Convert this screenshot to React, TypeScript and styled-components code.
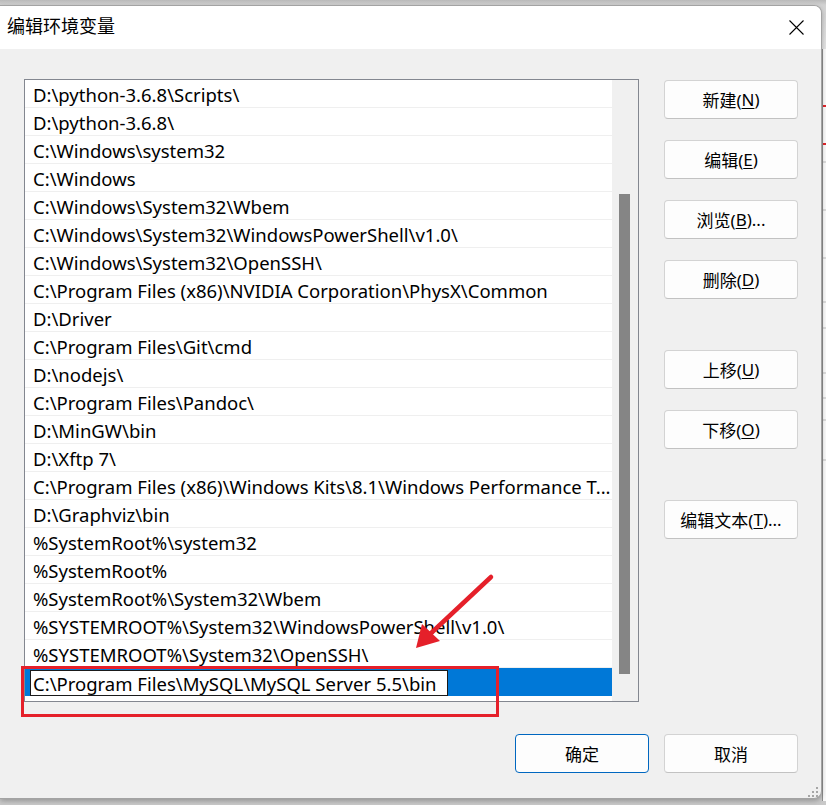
import React from 'react';
import styled, { createGlobalStyle } from 'styled-components';

const GlobalStyle = createGlobalStyle`
  html, body {
    margin: 0;
    padding: 0;
  }
  body {
    width: 826px;
    height: 805px;
    overflow: hidden;
    font-family: "Noto Sans", "Noto Sans CJK SC", sans-serif;
  }
`;

const paths = [
  'D:\\python-3.6.8\\Scripts\\',
  'D:\\python-3.6.8\\',
  'C:\\Windows\\system32',
  'C:\\Windows',
  'C:\\Windows\\System32\\Wbem',
  'C:\\Windows\\System32\\WindowsPowerShell\\v1.0\\',
  'C:\\Windows\\System32\\OpenSSH\\',
  'C:\\Program Files (x86)\\NVIDIA Corporation\\PhysX\\Common',
  'D:\\Driver',
  'C:\\Program Files\\Git\\cmd',
  'D:\\nodejs\\',
  'C:\\Program Files\\Pandoc\\',
  'D:\\MinGW\\bin',
  'D:\\Xftp 7\\',
  'C:\\Program Files (x86)\\Windows Kits\\8.1\\Windows Performance T...',
  'D:\\Graphviz\\bin',
  '%SystemRoot%\\system32',
  '%SystemRoot%',
  '%SystemRoot%\\System32\\Wbem',
  '%SYSTEMROOT%\\System32\\WindowsPowerShell\\v1.0\\',
  '%SYSTEMROOT%\\System32\\OpenSSH\\',
];

const editing = 'C:\\Program Files\\MySQL\\MySQL Server 5.5\\bin';

const sideButtons = [
  { label: '新建', key: 'N', gap: 0 },
  { label: '编辑', key: 'E', gap: 21 },
  { label: '浏览', key: 'B', gap: 21, dots: true },
  { label: '删除', key: 'D', gap: 21 },
  { label: '上移', key: 'U', gap: 51 },
  { label: '下移', key: 'O', gap: 21 },
  { label: '编辑文本', key: 'T', gap: 51, dots: true },
];

// the window behind the dialog, only a sliver of it shows on the right
const behindRows = [
  { h: 58, line: '#e0262b' },
  { h: 38, line: '#e0262b' },
  { h: 18, line: '#dcdcdc' },
  { h: 48, line: '#dcdcdc' },
  { h: 48, line: '#dcdcdc' },
  { h: 44, line: '#dcdcdc' },
  { h: 26, line: '#dcdcdc' },
  { h: 45, line: '#dcdcdc' },
  { h: 25, line: '#dcdcdc' },
  { h: 22, line: '#dcdcdc' },
  { h: 40, line: '#dcdcdc' },
  { h: 340, line: 'transparent' },
];

const Page = styled.div`
  position: relative;
  display: flex;
  align-items: flex-start;
  width: 826px;
  height: 805px;
  padding-top: 5px;
  box-sizing: border-box;
  background: linear-gradient(#b9b9b9, #d2d2d2 5px, #e4e4e4 50px, #c9c9c9);
`;

const Dialog = styled.div`
  position: relative;
  display: flex;
  flex-direction: column;
  flex: none;
  width: 822px;
  height: 794px;
  box-sizing: border-box;
  border: 1px solid #a3a3a3;
  border-left: none;
  border-radius: 0 8px 8px 0;
  background: #f0f0f0;
  overflow: hidden;
  box-shadow: 0 2px 5px rgba(0, 0, 0, 0.25);
`;

const TitleBar = styled.div`
  display: flex;
  align-items: center;
  justify-content: space-between;
  height: 43px;
  padding-left: 7px;
  background: #ffffff;
`;

const Title = styled.div`
  font-family: "Noto Sans CJK SC", sans-serif;
  font-size: 18px;
  color: #000;
  margin-bottom: 5px;
`;

const CloseButton = styled.div`
  display: flex;
  align-items: center;
  justify-content: center;
  width: 50px;
  height: 43px;
  margin-bottom: 1px;
`;

const Content = styled.div`
  display: flex;
  flex-direction: column;
  flex: 1;
  padding: 30px 23px 0 24px;
`;

const MainRow = styled.div`
  display: flex;
  gap: 25px;
`;

const ListBox = styled.div`
  display: flex;
  width: 615px;
  height: 623px;
  box-sizing: border-box;
  border: 1px solid #838790;
  background: #ffffff;
`;

const Rows = styled.div`
  display: flex;
  flex-direction: column;
  width: 587px;
`;

const Row = styled.div`
  height: 28px;
  box-sizing: border-box;
  padding: 3px 8px 0;
  border-bottom: 1px solid #efefef;
  font-size: 18.5px;
  line-height: 24px;
  color: #000;
  white-space: nowrap;
  overflow: hidden;
`;

const SelectedRow = styled.div`
  display: flex;
  align-items: flex-end;
  height: 28px;
  padding-left: 5px;
  background: #0078d7;
`;

const EditBox = styled.div`
  width: 418px;
  height: 26px;
  box-sizing: border-box;
  padding: 2px 0 0 2px;
  border: 1px solid #1a1a1a;
  background: #ffffff;
  font-size: 18.5px;
  line-height: 22px;
  color: #000;
  white-space: nowrap;
`;

const ScrollTrack = styled.div`
  flex: 1;
  padding: 114px 0 0 7px;
  background: #f0f0f0;
`;

const ScrollThumb = styled.div`
  width: 11px;
  height: 480px;
  background: #858585;
`;

const ButtonColumn = styled.div`
  display: flex;
  flex-direction: column;
  width: 134px;
  padding-top: 1px;
`;

const Button = styled.div<{ $gap?: number; $primary?: boolean }>`
  display: flex;
  align-items: center;
  justify-content: center;
  width: 134px;
  height: 39px;
  box-sizing: border-box;
  margin-top: ${(p) => p.$gap || 0}px;
  border: 1px solid ${(p) => (p.$primary ? '#0067c0' : '#d3d3d3')};
  border-bottom-color: ${(p) => (p.$primary ? '#0067c0' : '#c2c2c2')};
  border-radius: 4px;
  background: #fdfdfd;
  font-size: 17px;
  color: #000;

  u {
    text-decoration-thickness: 1px;
    text-underline-offset: 2px;
  }
`;

const Footer = styled.div`
  display: flex;
  justify-content: flex-end;
  gap: 15px;
  margin-top: 32px;
`;

const Grip = styled.svg`
  position: absolute;
  right: 2px;
  bottom: 0;
`;

const Behind = styled.div`
  display: flex;
  flex-direction: column;
  flex: 1;
  margin-top: 44px;
  overflow: hidden;
  background: #fafafa;
  border-left: 1px solid #8f8f8f;
`;

const BehindRow = styled.div<{ $h: number; $line: string }>`
  height: ${(p) => p.$h}px;
  box-sizing: border-box;
  border-bottom: 2px solid ${(p) => p.$line};
`;

const Annotation = styled.svg`
  position: absolute;
  top: 0;
  left: 0;
  pointer-events: none;
`;

export default function App() {
  return (
    <>
      <GlobalStyle />
      <Page>
        <Dialog>
          <TitleBar>
            <Title>编辑环境变量</Title>
            <CloseButton>
              <svg width="15" height="15" viewBox="0 0 15 15">
                <path d="M0.5 0.5 L14.5 14.5 M14.5 0.5 L0.5 14.5" stroke="#000" strokeWidth="1.1" />
              </svg>
            </CloseButton>
          </TitleBar>
          <Content>
            <MainRow>
              <ListBox>
                <Rows>
                  {paths.map((p) => (
                    <Row key={p}>{p}</Row>
                  ))}
                  <SelectedRow>
                    <EditBox>{editing}</EditBox>
                  </SelectedRow>
                </Rows>
                <ScrollTrack>
                  <ScrollThumb />
                </ScrollTrack>
              </ListBox>
              <ButtonColumn>
                {sideButtons.map((b) => (
                  <Button key={b.label} $gap={b.gap}>
                    {b.label}(<u>{b.key}</u>){b.dots ? '...' : ''}
                  </Button>
                ))}
              </ButtonColumn>
            </MainRow>
            <Footer>
              <Button $primary>确定</Button>
              <Button>取消</Button>
            </Footer>
          </Content>
          <Grip width="12" height="12" viewBox="0 0 12 12">
            {[
              [9, 1],
              [9, 5],
              [5, 5],
              [9, 9],
              [5, 9],
              [1, 9],
            ].map(([x, y]) => (
              <rect key={`${x}-${y}`} x={x} y={y} width="2" height="2" fill="#a6a6a6" />
            ))}
          </Grip>
        </Dialog>
        <Behind>
          {behindRows.map((r, i) => (
            <BehindRow key={i} $h={r.h} $line={r.line} />
          ))}
        </Behind>
        <Annotation width="826" height="805" viewBox="0 0 826 805">
          <rect x="22.5" y="667.5" width="475" height="48" fill="none" stroke="#e5202a" strokeWidth="3" />
          <line x1="491" y1="577" x2="428" y2="636" stroke="#e5202a" strokeWidth="4.5" strokeLinecap="round" />
          <polygon points="416,648 422,624 440,641" fill="#e5202a" />
        </Annotation>
      </Page>
    </>
  );
}
